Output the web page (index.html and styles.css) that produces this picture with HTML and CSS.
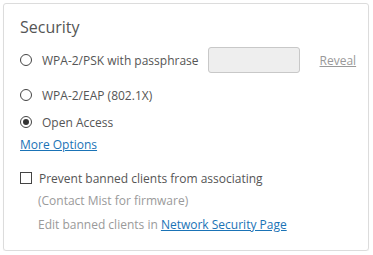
FILE: index.html
```html
<!DOCTYPE html>
<html>
<head>
<meta charset="utf-8">
<link rel="stylesheet" href="styles.css">
</head>
<body>
<div class="card">
  <div class="title">Security</div>
  <div class="row psk">
    <span class="radio"></span>
    <span class="label">WPA-2/PSK with passphrase</span>
    <span class="input"></span>
    <a class="reveal">Reveal</a>
  </div>
  <div class="row eap">
    <span class="radio"></span>
    <span class="label">WPA-2/EAP (802.1X)</span>
  </div>
  <div class="row open">
    <span class="radio checked"></span>
    <span class="label">Open Access</span>
  </div>
  <a class="more">More Options</a>
  <div class="row check">
    <span class="box"></span>
    <span class="label">Prevent banned clients from associating</span>
  </div>
  <div class="note">(Contact Mist for firmware)</div>
  <div class="note edit">Edit banned clients in <a class="link">Network Security Page</a></div>
</div>
</body>
</html>
```
FILE: styles.css
```css
html, body { margin: 0; padding: 0; background: #fff; }
body { font-family: "Open Sans", sans-serif; color: #555; }
.card {
  margin: 3px 0 0 3px;
  width: 366px;
  height: 248px;
  border: 1px solid #dcdcdc;
  border-radius: 3px;
  box-sizing: border-box;
  padding: 0 0 0 16px;
  box-shadow: 0 1px 1px rgba(0,0,0,0.06);
}
.title { font-size: 16px; margin-top: 12px; line-height: 22px; color: #555; }
.row { display: flex; align-items: center; font-size: 12px; }
.psk { margin-top: 9px; height: 26px; }
.eap { margin-top: 13px; height: 18px; }
.open { margin-top: 9px; height: 18px; }
.radio {
  width: 10px; height: 10px; border: 1px solid #444; border-radius: 50%;
  margin-right: 10px; box-sizing: content-box; position: relative;
}
.radio.checked::after {
  content: ""; position: absolute; left: 2px; top: 2px; width: 6px; height: 6px;
  border-radius: 50%; background: #333;
}
.input {
  width: 90px; height: 24px; border: 1px solid #c8c8c8; border-radius: 3px;
  background: #eee; margin-left: 9px;
}
.reveal { margin-left: 20px; color: #999; text-decoration: underline; font-size: 12px; }
.more {
  display: block; margin-top: 5px; font-size: 12px; color: #1a73b6;
  text-decoration: underline; line-height: 18px;
}
.check { margin-top: 15px; height: 18px; }
.box {
  width: 10px; height: 10px; border: 1px solid #444; margin-right: 7px;
}
.note { font-size: 12px; color: #9a9a9a; margin-left: 18px; margin-top: 5px; line-height: 18px; }
.edit { margin-top: 6px; }
.link { color: #1a73b6; text-decoration: underline; }
```
